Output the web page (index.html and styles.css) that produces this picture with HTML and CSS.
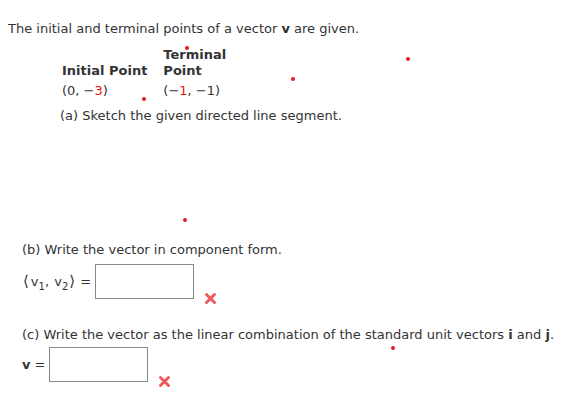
FILE: index.html
```html
<!DOCTYPE html>
<html>
<head>
<meta charset="utf-8">
<link rel="stylesheet" href="styles.css">
</head>
<body>
<div class="page">
  <p class="intro">The initial and terminal points of a vector <b>v</b> are given.</p>
  <table class="points">
    <tr class="head">
      <th>Initial Point</th>
      <th>Terminal<br>Point</th>
    </tr>
    <tr class="vals">
      <td>(0, −<span class="red">3</span>)</td>
      <td>(−<span class="red">1</span>, −1)</td>
    </tr>
  </table>
  <p class="part-a">(a) Sketch the given directed line segment.</p>

  <div class="part">
    <p class="q">(b) Write the vector in component form.</p>
    <div class="answer">
      <span class="lbl"><span class="br">⟨</span><i>v</i><sub>1</sub>, <i>v</i><sub>2</sub><span class="br">⟩</span> =</span>
      <span class="box box-b"></span>
      <svg class="xmark" width="13" height="13" viewBox="0 0 13 13"><path d="M2.5 2.5 L10.5 10.5 M10.5 2.5 L2.5 10.5" stroke="#ec5a5a" stroke-width="3" stroke-linecap="round"/></svg>
    </div>
  </div>

  <div class="part part-c">
    <p class="q">(c) Write the vector as the linear combination of the standard unit vectors <b>i</b> and <b>j</b>.</p>
    <div class="answer">
      <span class="lbl"><b>v</b> =</span>
      <span class="box box-c"></span>
      <svg class="xmark" width="13" height="13" viewBox="0 0 13 13"><path d="M2.5 2.5 L10.5 10.5 M10.5 2.5 L2.5 10.5" stroke="#ec5a5a" stroke-width="3" stroke-linecap="round"/></svg>
    </div>
  </div>

  <span class="dot" style="left:185px;top:46px"></span>
  <span class="dot" style="left:291px;top:77px"></span>
  <span class="dot" style="left:142px;top:97px"></span>
  <span class="dot" style="left:406px;top:57px"></span>
  <span class="dot" style="left:183px;top:218px"></span>
  <span class="dot" style="left:391px;top:346px"></span>
</div>
</body>
</html>
```
FILE: styles.css
```css
html, body {
  margin: 0;
  padding: 0;
  background: #fff;
}
.page {
  position: relative;
  width: 581px;
  height: 404px;
  padding: 0 8px;
  box-sizing: border-box;
  font-family: "DejaVu Sans", Verdana, sans-serif;
  font-size: 13px;
  line-height: 16px;
  color: #333;
}
p { margin: 0; }
.intro {
  padding-top: 21px;
}
.points {
  border-collapse: collapse;
  margin-left: 50px;
  margin-top: 10px;
}
.points th, .points td {
  padding: 0 4px;
  text-align: left;
  vertical-align: bottom;
}
.points th {
  font-weight: bold;
  padding-right: 12px;
}
.points td { padding-top: 4px; }
.red { color: #e8120c; }
.part-a {
  margin-left: 52px;
  margin-top: 9px;
}
.part {
  margin-left: 14px;
  margin-top: 118px;
}
.part-c { margin-top: 28px; }
.answer {
  display: flex;
  align-items: center;
  margin-top: 6px;
}
.part-c .answer { margin-top: 4px; }
.lbl { white-space: nowrap; }
.lbl .br { font-size: 15px; margin: 0 1px; }
.lbl sub { font-size: 10px; line-height: 0; }
.lbl i { font-style: normal; margin-left: 1px; }
.box {
  display: block;
  border: 1px solid #888;
  height: 33px;
  background: #fff;
}
.box-b { width: 97px; margin-left: 4px; }
.box-c { width: 97px; margin-left: 3px; }
.xmark {
  align-self: flex-end;
  margin-left: 10px;
  margin-bottom: -6px;
}
.dot {
  position: absolute;
  width: 4px;
  height: 4px;
  border-radius: 50%;
  background: #e8191c;
}
```
